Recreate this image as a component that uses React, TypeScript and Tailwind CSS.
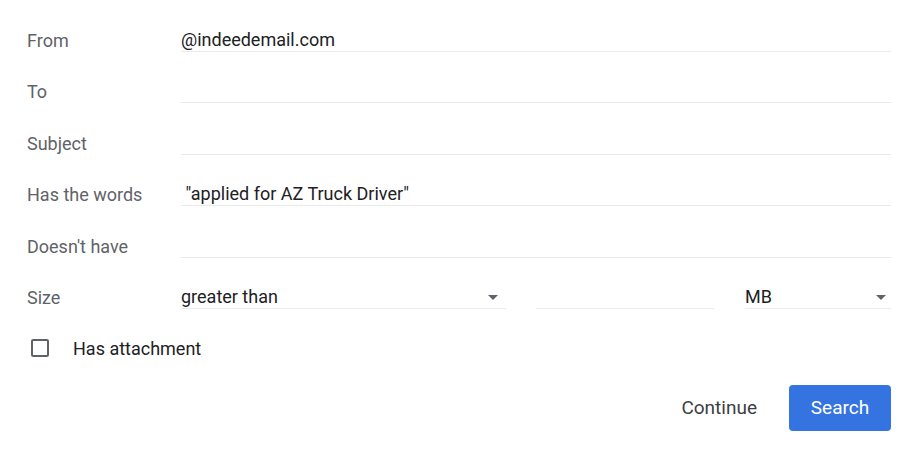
const labelCls = 'w-[154px] shrink-0 h-[23px] leading-[23px] text-[18px] text-[#5f6368]'
const fieldCls = 'h-[23px] leading-[22px] text-[18px] text-[#202124] border-b border-[#e8eaed]'

function Row({ label, value }: { label: string; value?: string }) {
  return (
    <div className="flex items-end h-[51.5px]">
      <div className={labelCls}>{label}</div>
      <div className={`flex-1 ${fieldCls}`}>{value}</div>
    </div>
  )
}

function Caret({ mr }: { mr: string }) {
  return (
    <svg width="10" height="5" viewBox="0 0 10 5" className={mr}>
      <path d="M0 0 L10 0 L5 5 Z" fill="#5f6368" />
    </svg>
  )
}

export default function App() {
  return (
    <div className="w-[920px] h-[457px] bg-white pl-[27px] pr-[29px]" style={{ fontFamily: 'Roboto, "Liberation Sans", sans-serif' }}>
      <Row label="From" value="@indeedemail.com" />
      <Row label="To" />
      <Row label="Subject" />
      <Row label="Has the words" value={'\u00a0"applied for AZ Truck Driver"'} />
      <Row label="Doesn't have" />

      <div className="flex items-end h-[51.5px]">
        <div className={labelCls}>Size</div>
        <div className={`w-[325px] flex items-center justify-between ${fieldCls}`}>
          <span>greater than</span>
          <Caret mr="mr-[8px]" />
        </div>
        <div className={`w-[178px] ml-[30px] ${fieldCls}`}></div>
        <div className={`flex-1 ml-[31px] flex items-center justify-between ${fieldCls}`}>
          <span>MB</span>
          <Caret mr="mr-[5px]" />
        </div>
      </div>

      <div className="flex items-end h-[51.5px] pb-[1px]">
        <div className="flex items-center h-[23px] gap-[24px] pl-[4px]">
          <div className="w-[18px] h-[18px] border-2 border-[#5f6368] rounded-[2px]" />
          <span className="text-[18px] text-[#202124]">Has attachment</span>
        </div>
      </div>

      <div className="flex justify-end items-center gap-[32px] mt-[24.5px]">
        <button className="text-[19px] text-[#3c4043]">Continue</button>
        <button className="w-[102px] h-[46px] rounded-[4px] bg-[#3574e0] text-white text-[19px]">Search</button>
      </div>
    </div>
  )
}
